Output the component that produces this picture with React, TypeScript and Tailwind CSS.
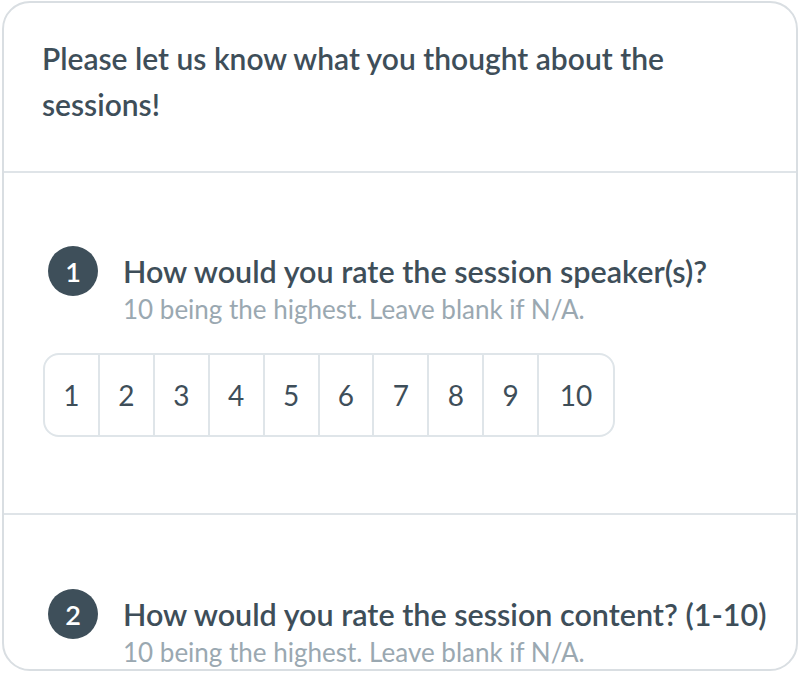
import React from "react";

function Question({ n, text }: { n: number; text: string }) {
  return (
    <div className="flex items-start">
      <div className="w-[50px] h-[50px] rounded-full bg-[#3e4f5a] text-white flex items-center justify-center text-[27px] font-semibold ml-[44px] shrink-0 leading-none">
        {n}
      </div>
      <div className="ml-[25px] pt-[7px]">
        <div className="text-[30.5px] leading-[36px] font-semibold text-[#3e4e59]">{text}</div>
        <div className="text-[26px] leading-[30px] text-[#9aa8b1] mt-[5px]">10 being the highest. Leave blank if N/A.</div>
      </div>
    </div>
  );
}

export default function App() {
  const nums = [1, 2, 3, 4, 5, 6, 7, 8, 9, 10];
  return (
    <div className="w-[800px] h-[673px] bg-white pt-[1px] pl-[2px] overflow-hidden" style={{ fontFamily: 'Lato, sans-serif' }}>
      <div className="w-[796px] h-[670px] border-2 border-[#d9dee2] rounded-[28px] overflow-hidden flex flex-col">
        <div className="h-[170px] border-b-2 border-[#dfe4e8] pt-[32px] pl-[38px] shrink-0">
          <div className="text-[30px] leading-[46px] font-semibold text-[#3e4e59] max-w-[660px]">
            Please let us know what you thought about the sessions!
          </div>
        </div>
        <div className="h-[342px] border-b-2 border-[#dfe4e8] pt-[73px] shrink-0">
          <Question n={1} text="How would you rate the session speaker(s)?" />
          <div className="ml-[39px] mt-[29px] flex w-[572px] h-[84px] border-2 border-[#dfe5e9] rounded-[16px] overflow-hidden">
            {nums.map((v, i) => (
              <div
                key={v}
                className={`${i === 9 ? "w-[74px]" : "w-[55px]"} ${i < 9 ? "border-r-2 border-[#dfe5e9]" : ""} flex items-center justify-center text-[28px] text-[#3e4e59]`}
              >
                {v}
              </div>
            ))}
          </div>
        </div>
        <div className="pt-[74px]">
          <Question n={2} text="How would you rate the session content? (1-10)" />
        </div>
      </div>
    </div>
  );
}
